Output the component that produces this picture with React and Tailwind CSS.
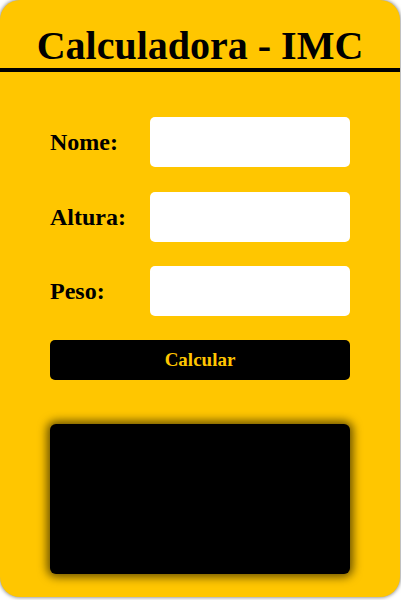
import React, { useState } from 'react';

const serif = { fontFamily: '"Liberation Serif", "Times New Roman", serif' };

function Campo({ label, value, onChange }) {
    return (
        <div className="flex items-center h-[50px]">
            <label className="w-[100px] text-[24px] font-bold text-black">{label}</label>
            <input
                type="text"
                value={value}
                onChange={e => onChange(e.target.value)}
                className="w-[200px] h-[50px] bg-white rounded-[5px] outline-none px-2 text-[18px]"
            />
        </div>
    );
}

export default function App() {
    const [nome, setNome] = useState('');
    const [altura, setAltura] = useState('');
    const [peso, setPeso] = useState('');
    const [resultado, setResultado] = useState('');

    const calcular = () => {
        const a = parseFloat(altura.replace(',', '.'));
        const p = parseFloat(peso.replace(',', '.'));
        if (!nome || !a || !p) return;
        const imc = (p / (a * a)).toFixed(1);
        setResultado(`${nome}, seu IMC é ${imc}`);
    };

    return (
        <div className="w-[401px] h-[600px] bg-white" style={serif}>
            <div className="w-[400px] h-[597px] bg-[#ffc600] rounded-[20px] shadow-[0_0_4px_rgba(0,0,0,0.6)] overflow-hidden">
                {/* Cabeçalho */}
                <div className="pt-[23px] border-b-[4px] border-black">
                    <h1 className="text-[40px] leading-[45px] font-bold text-center text-black">Calculadora - IMC</h1>
                </div>

                <div className="px-[50px] pt-[45px]">
                    <div className="flex flex-col gap-[24.5px]">
                        <Campo label="Nome:" value={nome} onChange={setNome} />
                        <Campo label="Altura:" value={altura} onChange={setAltura} />
                        <Campo label="Peso:" value={peso} onChange={setPeso} />
                    </div>

                    <button
                        onClick={calcular}
                        className="mt-[24px] w-[300px] h-[40px] bg-black rounded-[5px] text-[#ffc600] text-[19px] font-bold"
                    >
                        Calcular
                    </button>

                    <div className="mt-[44px] w-[300px] h-[150px] bg-black rounded-[6px] shadow-[0_0_10px_3px_rgba(0,0,0,0.6)] text-[#ffc600] text-[20px] font-bold flex items-center justify-center text-center px-4">
                        {resultado}
                    </div>
                </div>
            </div>
        </div>
    );
}
